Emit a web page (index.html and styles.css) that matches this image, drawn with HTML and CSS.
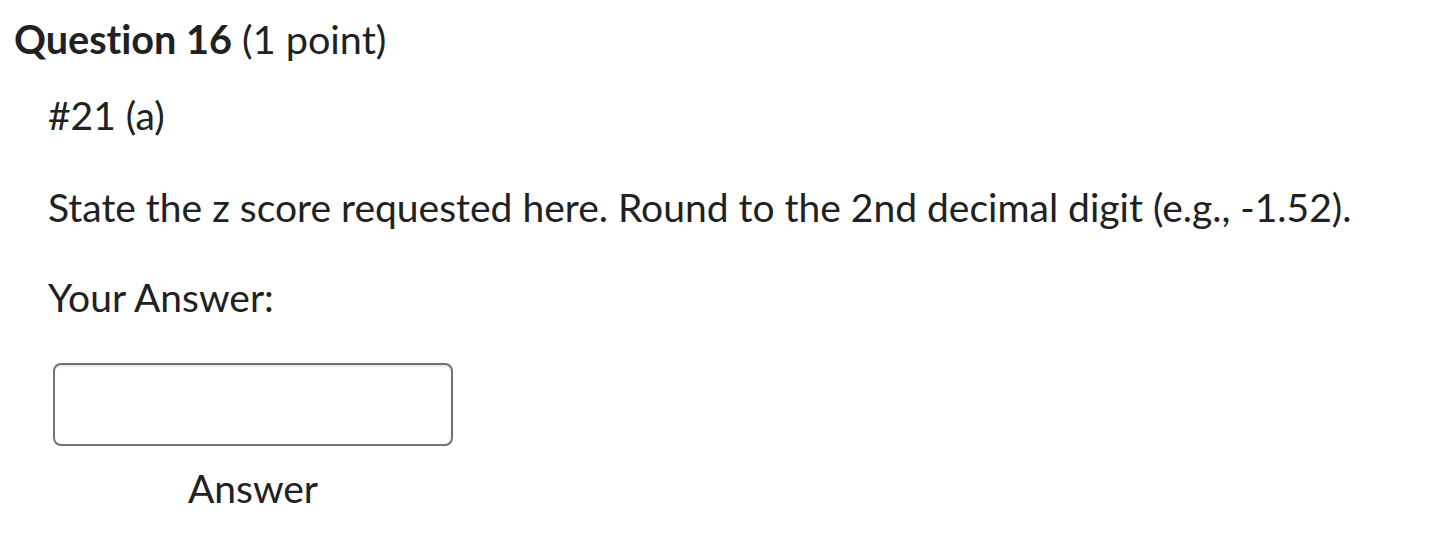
FILE: index.html
```html
<!DOCTYPE html>
<html>
<head>
<meta charset="utf-8">
<link rel="stylesheet" href="styles.css">
</head>
<body>
<div class="question">
  <h2 class="q-title"><span class="q-num">Question 16</span> (1 point)</h2>
  <div class="q-body">
    <p class="q-ref">#21 (a)</p>
    <p class="q-text">State the z score requested here. Round to the 2nd decimal digit (e.g., -1.52).</p>
    <p class="q-label">Your Answer:</p>
    <div class="answer-field">
      <input class="answer-input" type="text" aria-label="Answer">
      <span class="answer-caption">Answer</span>
    </div>
  </div>
</div>
</body>
</html>
```

FILE: styles.css
```css
html, body {
  margin: 0;
  padding: 0;
  background: #ffffff;
}
body {
  font-family: "Lato", "Liberation Sans", sans-serif;
  color: #202122;
  font-variant-ligatures: none;
  font-feature-settings: "liga" 0;
}
.question {
  padding: 14px 0 0 14px;
}
.q-title {
  margin: 0;
  font-size: 39.6px;
  font-weight: 400;
  line-height: 50px;
}
.q-num {
  font-weight: 700;
}
.q-body {
  padding-left: 34px;
}
.q-ref, .q-text, .q-label {
  margin: 0;
  font-size: 39px;
  line-height: 44px;
}
.q-ref {
  margin-top: 29px;
}
.q-text {
  margin-top: 48px;
}
.q-label {
  margin-top: 46px;
}
.answer-field {
  display: inline-flex;
  flex-direction: column;
  align-items: center;
  margin-top: 44px;
}
.answer-input {
  box-sizing: border-box;
  width: 400px;
  height: 83px;
  margin: 0 0 0 5px;
  border: 2px solid #6f7378;
  border-radius: 8px;
  box-shadow: inset 0 3px 2px -1px #e8eaec;
  background: #fff;
  outline: none;
}
.answer-caption {
  margin-top: 20px;
  margin-left: 5px;
  font-size: 39px;
  line-height: 44px;
}
```
